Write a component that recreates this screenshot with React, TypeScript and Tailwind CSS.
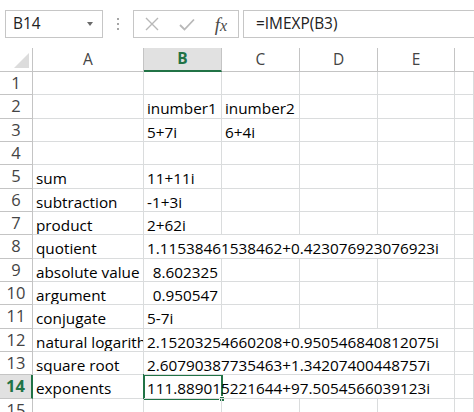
import React from "react";

type Row = {
  n: number;
  a?: string;
  b?: string;
  c?: string;
  wide?: boolean;
  num?: boolean;
};

const ROWS: Row[] = [
  { n: 1 },
  { n: 2, b: "inumber1", c: "inumber2" },
  { n: 3, b: "5+7i", c: "6+4i" },
  { n: 4 },
  { n: 5, a: "sum", b: "11+11i" },
  { n: 6, a: "subtraction", b: "-1+3i" },
  { n: 7, a: "product", b: "2+62i" },
  { n: 8, a: "quotient", b: "1.11538461538462+0.423076923076923i", wide: true },
  { n: 9, a: "absolute value", b: "8.602325", num: true },
  { n: 10, a: "argument", b: "0.950547", num: true },
  { n: 11, a: "conjugate", b: "5-7i" },
  { n: 12, a: "natural logarithm", b: "2.15203254660208+0.950546840812075i", wide: true },
  { n: 13, a: "square root", b: "2.60790387735463+1.34207400448757i", wide: true },
  { n: 14, a: "exponents", b: "111.889015221644+97.5054566039123i", wide: true },
  { n: 15 },
];

const SELECTED_ROW = 14;

const cell = "h-full shrink-0 border-r border-b border-[#dadcdd] flex items-end pb-[1px] leading-none whitespace-nowrap overflow-hidden";

function FormulaBar() {
  return (
    <div className="h-[48px] flex items-start pt-[10px] pl-[5px] text-[15.4px] text-[#222]">
      {/* name box */}
      <div className="w-[98px] h-[28px] shrink-0 border border-[#c6c6c6] flex items-center justify-between pl-[7px] pr-[9px] leading-none">
        <span>B14</span>
        <span className="w-0 h-0 border-l-[3.5px] border-r-[3.5px] border-t-[4px] border-l-transparent border-r-transparent border-t-[#6a6a6a]" />
      </div>
      {/* splitter dots */}
      <div className="w-[30px] h-[28px] shrink-0 flex flex-col items-center justify-center gap-[3px]">
        <span className="w-[2px] h-[2px] bg-[#a6a6a6]" />
        <span className="w-[2px] h-[2px] bg-[#a6a6a6]" />
        <span className="w-[2px] h-[2px] bg-[#a6a6a6]" />
      </div>
      {/* cancel / enter / fx */}
      <div className="w-[106px] h-[28px] shrink-0 border border-[#c6c6c6] flex items-center">
        <div className="w-[35px] flex justify-center">
          <svg width="14" height="14" viewBox="0 0 14 14">
            <path d="M1 1 L13 13 M13 1 L1 13" stroke="#b8b8b8" strokeWidth="1.4" fill="none" />
          </svg>
        </div>
        <div className="w-[35px] flex justify-center">
          <svg width="16" height="13" viewBox="0 0 16 13">
            <path d="M1 7 L5.5 11.5 L15 1.5" stroke="#b8b8b8" strokeWidth="1.8" fill="none" />
          </svg>
        </div>
        <div className="w-[34px] flex justify-center">
          <span className="font-['Liberation_Serif',serif] italic text-[19px] leading-none text-[#4a4a4a]">
            f<span className="text-[16px]">x</span>
          </span>
        </div>
      </div>
      {/* formula input */}
      <div className="flex-1 h-[28px] ml-[4px] border border-r-0 border-[#c6c6c6] flex items-center pl-[12px] leading-none">
        =IMEXP(B3)
      </div>
    </div>
  );
}

function HeaderRow() {
  const cols: [string, number][] = [
    ["A", 111],
    ["B", 78],
    ["C", 78],
    ["D", 78],
    ["E", 77],
  ];
  return (
    <div className="flex h-[24px] text-[15.5px] text-[#444] leading-none">
      <div className="w-[33px] shrink-0 border-r border-b border-[#c4c4c4] flex items-end justify-end pr-[3px] pb-[3px]">
        <svg width="15" height="15" viewBox="0 0 15 15">
          <path d="M15 0 L15 15 L0 15 Z" fill="#dcdcdc" />
        </svg>
      </div>
      {cols.map(([l, w]) => {
        const sel = l === "B";
        return (
          <div
            key={l}
            style={{ width: w }}
            className={
              sel
                ? "shrink-0 border-r border-[#c4c4c4] border-b-2 border-b-[#217346] bg-[#e1e1e1] flex items-center justify-center font-bold text-[#217346]"
                : "shrink-0 border-r border-b border-[#c4c4c4] flex items-center justify-center"
            }
          >
            {l}
          </div>
        );
      })}
      <div className="flex-1 border-b border-[#c4c4c4]" />
    </div>
  );
}

function SheetRow({ r }: { r: Row }) {
  const sel = r.n === SELECTED_ROW;
  return (
    <div className="flex h-[23.33px] text-[15.3px] text-black relative">
      <div
        className={
          sel
            ? "w-[33px] shrink-0 h-full border-b border-[#c4c4c4] border-r-2 border-r-[#217346] bg-[#e1e1e1] flex items-center justify-center leading-none font-bold text-[#217346] text-[16.5px]"
            : "w-[33px] shrink-0 h-full border-r border-b border-[#c4c4c4] flex items-center justify-center leading-none text-[#444] text-[16.5px]"
        }
      >
        {r.n}
      </div>
      <div className={`${cell} w-[111px] pl-[3px]`}>{r.a}</div>
      {r.wide ? (
        <div className={`${cell} w-[311px] pl-[3px] overflow-visible relative z-10`}>{r.b}</div>
      ) : (
        <>
          <div className={`${cell} w-[78px] ${r.num ? "justify-end pr-[3px]" : "pl-[3px]"}`}>{r.b}</div>
          <div className={`${cell} w-[78px] pl-[3px]`}>{r.c}</div>
          <div className={`${cell} w-[78px]`} />
          <div className={`${cell} w-[77px]`} />
        </>
      )}
      <div className={`${cell} flex-1`} />
      {sel && (
        <div className="absolute left-[143px] top-[-1px] w-[80px] h-[25.33px] border-2 border-[#217346]">
          <span className="absolute right-[-4px] bottom-[-4px] w-[6px] h-[6px] bg-[#217346] border border-white" />
        </div>
      )}
    </div>
  );
}

export default function App() {
  return (
    <div className="w-[474px] h-[412px] overflow-hidden bg-white font-['Open_Sans',sans-serif]">
      <FormulaBar />
      <HeaderRow />
      {ROWS.map((r) => (
        <SheetRow key={r.n} r={r} />
      ))}
    </div>
  );
}
